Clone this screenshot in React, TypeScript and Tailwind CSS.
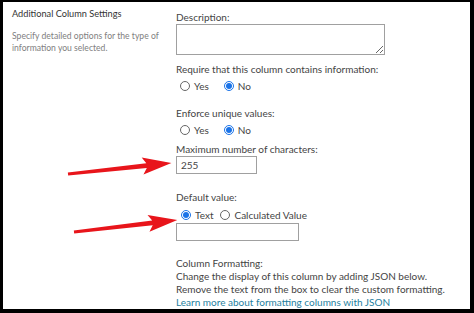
import React from 'react';

const Radio = ({ checked, label }: { checked?: boolean; label: string }) => (
  <span className="flex items-center gap-[4px]">
    <span
      className={`w-[10px] h-[10px] rounded-full border flex items-center justify-center bg-white ${
        checked ? 'border-[#1a73e8]' : 'border-[#666]'
      }`}
    >
      {checked && <span className="w-[6px] h-[6px] rounded-full bg-[#1a73e8]" />}
    </span>
    <span>{label}</span>
  </span>
);

const Arrow = ({ x, y, angle, length }: { x: number; y: number; angle: number; length: number }) => (
  <g transform={`translate(${x} ${y}) rotate(${angle})`}>
    <polygon
      points={`0,-1.6 ${length - 25},-2.4 ${length - 29},-8.5 ${length},0 ${length - 29},8.5 ${length - 25},2.4 0,1.6`}
      fill="#e8151b"
    />
  </g>
);

export default function App() {
  return (
    <div className="relative w-[474px] h-[313px] bg-black pl-[3px] pt-[2px] overflow-hidden">
      <div
        className="w-[467px] h-[307px] bg-white flex overflow-hidden text-[#444]"
        style={{ fontFamily: 'Lato, "Noto Sans", sans-serif' }}
      >
        {/* left description column */}
        <div className="w-[173px] shrink-0 pl-[9px] pt-[5px]">
          <div className="text-[9.2px] leading-[14px] text-[#333]">Additional Column Settings</div>
          <div className="mt-[9px] text-[8.6px] leading-[12px] text-[#808080]">
            Specify detailed options for the type of information you selected.
          </div>
        </div>

        {/* settings column */}
        <div className="flex-1 flex flex-col text-[10px] leading-[14px] pt-[8px]">
          <div className="shrink-0">Description:</div>
          <textarea
            readOnly
            className="shrink-0 w-[209px] h-[31px] border border-[#a0a0a0] outline-none"
          />

          <div className="shrink-0 mt-[7px]">Require that this column contains information:</div>
          <div className="shrink-0 mt-[3px] ml-[4px] flex gap-[15px]">
            <Radio label="Yes" />
            <Radio checked label="No" />
          </div>

          <div className="shrink-0 mt-[13px]">Enforce unique values:</div>
          <div className="shrink-0 mt-[3px] ml-[4px] flex gap-[15px]">
            <Radio label="Yes" />
            <Radio checked label="No" />
          </div>

          <div className="shrink-0 mt-[5px]">Maximum number of characters:</div>
          <input
            readOnly
            value="255"
            className="shrink-0 w-[81px] h-[18px] border border-[#a0a0a0] px-[4px] text-[10px] text-[#444] outline-none"
          />

          <div className="shrink-0 mt-[16px]">Default value:</div>
          <div className="shrink-0 mt-[4px] ml-[5px] flex gap-[7px]">
            <Radio checked label="Text" />
            <Radio label="Calculated Value" />
          </div>
          <input
            readOnly
            className="shrink-0 mt-[1px] w-[123px] h-[18px] border border-[#a0a0a0] outline-none"
          />

          <div className="shrink-0 mt-[16px] leading-[13px]">
            <div>Column Formatting:</div>
            <div>Change the display of this column by adding JSON below.</div>
            <div>Remove the text from the box to clear the custom formatting.</div>
            <div className="text-[#1f7fa0]">Learn more about formatting columns with JSON</div>
          </div>
        </div>
      </div>

      <svg className="absolute inset-0 pointer-events-none" width="474" height="313">
        <Arrow x={68} y={174} angle={-6.1} length={104} />
        <Arrow x={74} y={232} angle={-6.6} length={104} />
      </svg>
    </div>
  );
}
